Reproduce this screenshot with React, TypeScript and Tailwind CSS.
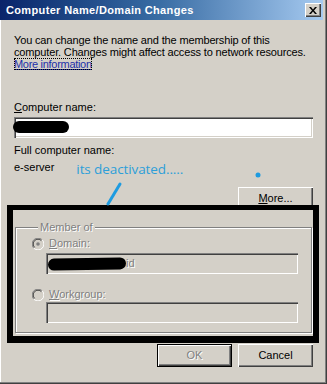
import React from "react";

const sunken =
  "shadow-[inset_1px_1px_0_#808080,inset_2px_2px_0_#404040,inset_-1px_-1px_0_#ffffff,inset_-2px_-2px_0_#d4d0c8]";
const raised =
  "shadow-[inset_1px_1px_0_#ffffff,inset_-1px_-1px_0_#404040,inset_-2px_-2px_0_#808080]";
const disabledText = "text-[#808080] [text-shadow:1px_1px_0_#ffffff]";

const Radio = ({ checked }: { checked?: boolean }) => (
  <svg width="12" height="12" viewBox="0 0 12 12" className="shrink-0">
    <circle cx="6" cy="6" r="5.5" fill="#d4d0c8" />
    <path d="M10.2 1.8 A5.5 5.5 0 0 0 1.8 10.2" fill="none" stroke="#808080" strokeWidth="1" />
    <path d="M9.4 2.6 A4.5 4.5 0 0 0 2.6 9.4" fill="none" stroke="#404040" strokeWidth="1" />
    <path d="M1.8 10.2 A5.5 5.5 0 0 0 10.2 1.8" fill="none" stroke="#ffffff" strokeWidth="1" />
    {checked && <circle cx="6" cy="6" r="1.8" fill="#808080" />}
  </svg>
);

const Button = ({
  children,
  disabled,
  isDefault,
}: {
  children: React.ReactNode;
  disabled?: boolean;
  isDefault?: boolean;
}) => (
  <div
    className={
      "w-[75px] h-[23px] flex items-center justify-center bg-[#d4d0c8] " +
      (isDefault
        ? "border border-black shadow-[inset_1px_1px_0_#ffffff,inset_-1px_-1px_0_#404040,inset_-2px_-2px_0_#808080]"
        : raised)
    }
  >
    <span className={disabled ? disabledText : "text-black"}>{children}</span>
  </div>
);

export default function App() {
  return (
    <div className="relative w-[327px] h-[384px] overflow-hidden bg-[#d4d0c8] font-['Liberation_Sans',Arial,sans-serif] text-[11px] leading-[13px] text-black shadow-[inset_-1px_-1px_0_#404040,inset_-2px_-2px_0_#808080,inset_1px_0_0_#ffffff]">
      <div className="flex flex-col h-full pr-[4px]">
        {/* title bar */}
        <div className="h-[20px] shrink-0 flex items-center bg-linear-to-r from-[#0a246a] via-[#3a6ea5] to-[#a6caf0] pl-[6px] pr-[2px]">
          <span className="text-white font-bold text-[11px] leading-[14px] tracking-[0.35px]">
            Computer Name/Domain Changes
          </span>
          <div className={"ml-auto w-[16px] h-[14px] flex items-center justify-center bg-[#d4d0c8] " + raised}>
            <svg width="8" height="7" viewBox="0 0 8 7">
              <path d="M0 0h2l2 2.5L6 0h2L5 3.5 8 7H6L4 4.5 2 7H0l3-3.5z" fill="#000" />
            </svg>
          </div>
        </div>

        <div className="flex flex-col pl-[14px] pr-[10px]">
          <p className="mt-[14px] leading-[12px] whitespace-nowrap tracking-[-0.15px]">
            You can change the name and the membership of this
            <br />
            computer. Changes might affect access to network resources.
            <br />
            <span className="inline-block outline-1 outline-dotted outline-black -outline-offset-1 text-[#1c2fa8] underline tracking-[-0.3px]">
              More information
            </span>
          </p>

          <div className="mt-[31px]">
            <span className="underline">C</span>omputer name:
          </div>
          <div className={"mt-[3px] h-[21px] bg-white relative " + sunken}>
            <div className="absolute left-[-1px] top-[4px] w-[56px] h-[12px] rounded-full bg-black" />
          </div>

          <div className="mt-[6px]">Full computer name:</div>
          <div className="mt-[3px] h-[13px] flex items-baseline">
            <span>e-server</span>
            {/* hand-written note on the screenshot */}
            <span className="relative top-[3px] ml-[22px] text-[13.5px] leading-[13px] tracking-[-0.1px] text-[#2d9fd9] font-['Open_Sans',sans-serif]">
              its deactivated.....
            </span>
          </div>

          <div className="mt-[14px] self-end">
            <Button>
              <span className="underline">M</span>ore...
            </Button>
          </div>

          <fieldset className="mt-[11px] mr-[1px] ml-[1px] border border-[#808080] shadow-[1px_1px_0_#ffffff,inset_1px_1px_0_#ffffff] pl-[16px] pr-[13px] pb-[9px]">
            <legend className={"ml-[6px] px-[2px] bg-[#d4d0c8] " + disabledText}>Member of</legend>
            <div className="mt-[3px] flex items-center gap-[5px]">
              <Radio checked />
              <span className={disabledText}>
                <span className="underline">D</span>omain:
              </span>
            </div>
            <div className={"mt-[3px] ml-[14px] h-[21px] bg-[#d4d0c8] flex items-center pl-[2px] " + sunken}>
              <div className="w-[78px] h-[12px] rounded-full bg-black -rotate-1" />
              <span className={disabledText}>id</span>
            </div>
            <div className="mt-[14px] flex items-center gap-[5px]">
              <Radio />
              <span className={disabledText}>
                <span className="underline">W</span>orkgroup:
              </span>
            </div>
            <div className={"mt-[1px] ml-[14px] h-[21px] bg-[#d4d0c8] " + sunken} />
          </fieldset>

          <div className="mt-[11px] flex justify-end gap-[6px]">
            <Button disabled isDefault>
              OK
            </Button>
            <Button>Cancel</Button>
          </div>
        </div>
      </div>

      {/* hand-drawn annotations over the screenshot */}
      <div className="absolute left-[7px] top-[205px] w-[312px] h-[138px] border-[6px] border-t-[5px] border-b-[7px] border-black pointer-events-none" />
      <svg className="absolute left-0 top-0 pointer-events-none" width="327" height="384">
        <line x1="108" y1="204" x2="120" y2="184" stroke="#1e9be0" strokeWidth="3" strokeLinecap="round" />
        <circle cx="258" cy="175" r="2.5" fill="#1e9be0" />
      </svg>
    </div>
  );
}
